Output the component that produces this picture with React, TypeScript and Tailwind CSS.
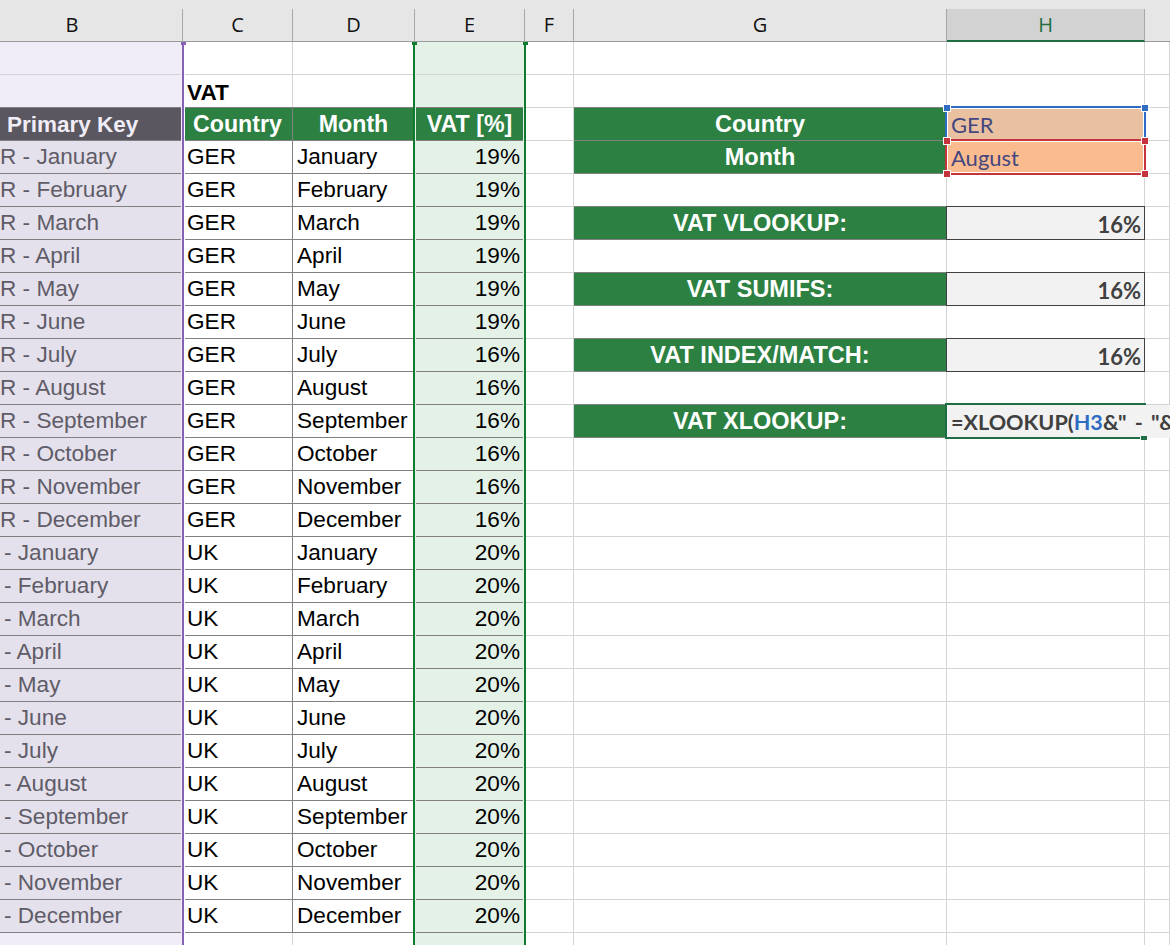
import React from "react";

const months = ["January","February","March","April","May","June","July","August","September","October","November","December"];
const gerVat = ["19%","19%","19%","19%","19%","19%","16%","16%","16%","16%","16%","16%"];
const rows = [
  ...months.map((m, i) => ({ key: "R - " + m, pad: "pl-0", c: "GER", m, v: gerVat[i] })),
  ...months.map((m) => ({ key: "- " + m, pad: "pl-[4px]", c: "UK", m, v: "20%" })),
];

const sans = "font-['Liberation_Sans',Arial,sans-serif]";
const body = `${sans} text-[22.6px] leading-[32px]`;
const lato = "font-['Lato','Noto_Sans',sans-serif]";
const grid = "h-[33px] border-r border-b border-[#d4d4d4] whitespace-nowrap";
const dark = "h-[33px] border-r border-b border-[#808080] whitespace-nowrap";

function Head({ children, sel, extra = "" }: { children: React.ReactNode; sel?: boolean; extra?: string }) {
  return (
    <div className={sel
      ? "h-full flex items-center justify-center border-r border-[#a8a8a8] border-b-2 border-b-[#1f6e43] bg-[#d2d2d2] text-[#1f6e43] font-['Open_Sans',sans-serif] text-[20px]"
      : `h-full flex items-center justify-center border-r border-[#a8a8a8] border-b border-b-[#9a9a9a] bg-[#e6e6e6] text-[#111] font-['Open_Sans',sans-serif] text-[20px] ${extra}`}>
      {children}
    </div>
  );
}

function Empty({ bg = "" }: { bg?: string }) {
  return <div className={`${grid} ${bg}`} />;
}

function Label({ children, size = "text-[23.5px]" }: { children: React.ReactNode; size?: string }) {
  return (
    <div className={`h-[33px] border-r border-b border-[#808080] shadow-[0_-1px_0_#808080] bg-[#2c8042] text-white font-bold text-center leading-[33px] whitespace-nowrap ${sans} ${size}`}>
      {children}
    </div>
  );
}

function Result() {
  return (
    <div className={`relative h-[33px] bg-[#f2f2f2] text-[#404040] font-bold text-right pr-[4px] text-[22px] leading-[35px] ${lato}`}>
      16%
      <span className="absolute -left-px -top-px right-0 bottom-0 border border-[#404040]" />
    </div>
  );
}

function Handle({ className }: { className: string }) {
  return <span className={`absolute w-[6px] h-[6px] ring-1 ring-white ${className}`} />;
}

export default function App() {
  const spacerRight = (
    <>
      <Empty />
      <Empty />
      <Empty />
      <Empty />
    </>
  );
  const rightFor = (r: number) => {
    if (r === 3)
      return (
        <>
          <Empty />
          <Label>Country</Label>
          <div className={`relative h-[33px] bg-[#eac1a0] text-[#44477f] text-[22px] leading-[34px] pl-[4px] ${lato}`}>
            GER
            <span className="absolute left-[-2px] right-[-1px] top-[-2px] bottom-[-1px] border-2 border-[#2f6dc4]">
              <span className="absolute inset-0 border border-white" />
            </span>
            <Handle className="bg-[#2f6dc4] left-[-3px] top-[-3px]" />
            <Handle className="bg-[#2f6dc4] right-[-3px] top-[-3px]" />
          </div>
          <Empty />
        </>
      );
    if (r === 4)
      return (
        <>
          <Empty />
          <Label>Month</Label>
          <div className={`relative h-[33px] bg-[#fabc8f] text-[#44477f] text-[22px] leading-[34px] pl-[4px] ${lato}`}>
            August
            <span className="absolute left-[-2px] right-[-1px] top-[-2px] bottom-[-1px] border-2 border-[#c5333d]">
              <span className="absolute inset-0 border border-white" />
            </span>
            <Handle className="bg-[#c5333d] left-[-3px] top-[-3px]" />
            <Handle className="bg-[#c5333d] right-[-3px] top-[-3px]" />
            <Handle className="bg-[#c5333d] left-[-3px] bottom-[-3px]" />
            <Handle className="bg-[#c5333d] right-[-3px] bottom-[-3px]" />
          </div>
          <Empty />
        </>
      );
    if (r === 6 || r === 8 || r === 10) {
      const t = r === 6 ? "VAT VLOOKUP:" : r === 8 ? "VAT SUMIFS:" : "VAT INDEX/MATCH:";
      return (
        <>
          <Empty />
          <Label>{t}</Label>
          <Result />
          <Empty />
        </>
      );
    }
    if (r === 12)
      return (
        <>
          <Empty />
          <Label>VAT XLOOKUP:</Label>
          <div className={`relative z-10 h-[33px] bg-[#f2f2f2] text-[#404040] font-bold whitespace-nowrap pl-[4px] text-[21.6px] leading-[34px] [word-spacing:3px] ${lato}`}>
            {"=XLOOKUP("}<span className="text-[#2f6dc4]">H3</span>{'&" - "&'}
            <span className="absolute left-[-2px] right-[-1px] top-[-2px] h-[2px] bg-[#1f6e43]" />
            <span className="absolute left-[-2px] top-[-2px] bottom-[-1px] w-[2px] bg-[#1f6e43]" />
            <span className="absolute left-[-2px] right-[5px] bottom-[-1px] h-[2px] bg-[#1f6e43]" />
            <span className="absolute right-[-2px] bottom-[-2px] w-[6px] h-[4px] bg-[#1f6e43]" />
          </div>
          <div className="h-[33px] bg-[#f2f2f2]" />
        </>
      );
    return spacerRight;
  };

  return (
    <div className="relative w-[1170px] h-[945px] overflow-hidden bg-white">
      <div className="h-[9px] bg-[#e6e6e6]" />
      <div className="grid grid-cols-[183px_110px_122px_110px_49px_373px_198px_25px] h-[33px]">
        <Head extra="pr-[38px]">B</Head>
        <Head>C</Head>
        <Head>D</Head>
        <Head>E</Head>
        <Head>F</Head>
        <Head>G</Head>
        <Head sel>H</Head>
        <div className="bg-[#e6e6e6] border-b border-[#9a9a9a]" />
      </div>
      <div className="grid grid-cols-[183px_110px_122px_110px_49px_373px_198px_25px] auto-rows-[33px]">
        {/* row 1 */}
        <Empty bg="bg-[#f0edf9]" />
        <Empty />
        <Empty />
        <Empty bg="bg-[#e3f1e6]" />
        {spacerRight}
        {/* row 2 */}
        <Empty bg="bg-[#f0edf9]" />
        <div className={`${grid} ${sans} text-[22.6px] leading-[36px] font-bold text-black pl-[4px]`}>VAT</div>
        <Empty />
        <Empty bg="bg-[#e3f1e6]" />
        {spacerRight}
        {/* row 3 header */}
        <div className={`${dark} shadow-[0_-1px_0_#808080] bg-[#5a5761] text-[#f0edf9] font-bold pl-[7px] ${sans} text-[22.5px] leading-[33px]`}>Primary Key</div>
        <Label size="text-[23.2px]">Country</Label>
        <Label size="text-[23.2px]">Month</Label>
        <Label size="text-[23.2px]">VAT [%]</Label>
        {rightFor(3)}
        {rows.map((r, i) => (
          <React.Fragment key={i}>
            <div className={`${dark} bg-[#e4e1ec] text-[#5f5c68] ${r.pad} ${body}`}>{r.key}</div>
            <div className={`${dark} bg-white text-black pl-[4px] ${body}`}>{r.c}</div>
            <div className={`${dark} bg-white text-black pl-[4px] ${body}`}>{r.m}</div>
            <div className={`${dark} bg-[#e3f1e6] text-black text-right pr-[4px] ${body}`}>{r.v}</div>
            {rightFor(i + 4)}
          </React.Fragment>
        ))}
        {/* row 28 */}
        <Empty bg="bg-[#f0edf9]" />
        <Empty />
        <Empty />
        <Empty bg="bg-[#e3f1e6]" />
        {spacerRight}
      </div>
      {/* formula reference range outlines */}
      <span className="absolute left-[181px] top-[44px] bottom-0 w-px bg-[#f0edf9]" />
      <span className="absolute left-[184px] top-[44px] bottom-0 w-px bg-white" />
      <span className="absolute left-[182px] top-[44px] bottom-0 w-[2px] bg-[#8561b8]" />
      <span className="absolute left-[181px] top-[42px] w-[5px] h-[3px] bg-[#8561b8]" />
      <span className="absolute left-[415px] top-[44px] bottom-0 w-px bg-[#e3f1e6]" />
      <span className="absolute left-[523px] top-[44px] bottom-0 w-px bg-[#e3f1e6]" />
      <span className="absolute left-[413px] top-[44px] bottom-0 w-[2px] bg-[#0f7b2f]" />
      <span className="absolute left-[524px] top-[44px] bottom-0 w-[2px] bg-[#0f7b2f]" />
      <span className="absolute left-[412px] top-[42px] w-[5px] h-[3px] bg-[#0f7b2f]" />
      <span className="absolute left-[523px] top-[42px] w-[5px] h-[3px] bg-[#0f7b2f]" />
    </div>
  );
}
